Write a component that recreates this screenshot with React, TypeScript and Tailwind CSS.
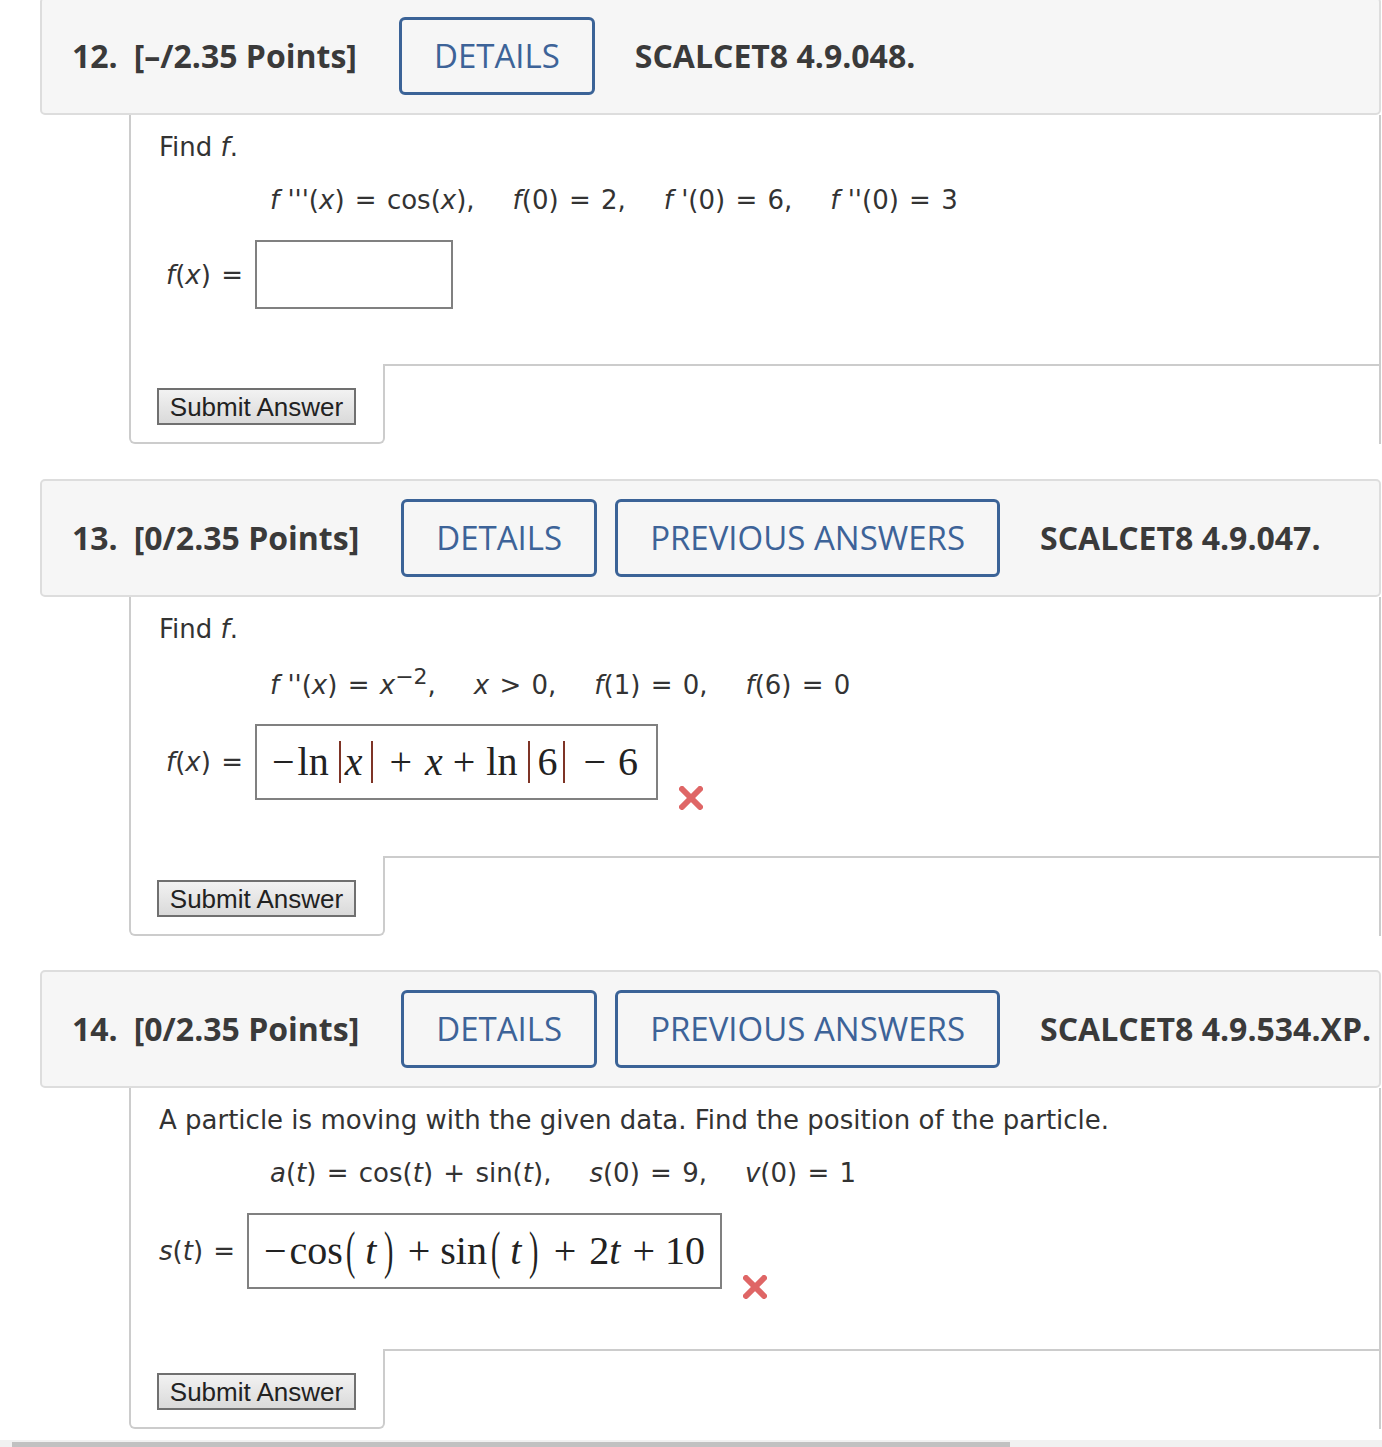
import React from "react";

const headFont = { fontFamily: '"Open Sans", "DejaVu Sans", sans-serif' };
const bodyFont = { fontFamily: '"DejaVu Sans", Verdana, sans-serif' };
const btnFont = { fontFamily: '"Liberation Sans", Arial, sans-serif' };
const mathFont = { fontFamily: '"Liberation Serif", "DejaVu Serif", serif' };

// operator with a little extra room either side, like the site's equation spacing
function Op({ s }: { s: string }) {
  return <span className="mx-[2px]"> {s} </span>;
}

function WrongMark() {
  return (
    <svg
      width="30"
      height="28"
      viewBox="0 0 30 28"
      className="ml-[18px] self-end mb-[-12px]"
    >
      <g stroke="#dd5a5a" strokeWidth="6" strokeLinecap="round" opacity="0.92">
        <line x1="6" y1="5" x2="24" y2="23" />
        <line x1="24" y1="5" x2="6" y2="23" />
      </g>
    </svg>
  );
}

function Bar({ ml }: { ml: string }) {
  return <span className={`inline-block w-[2px] h-[42px] bg-[#7e3426] ${ml}`} />;
}

function Paren({ ch, ml }: { ch: string; ml: string }) {
  return (
    <span className={`inline-block scale-x-[0.7] scale-y-[1.3] ${ml}`}>{ch}</span>
  );
}

function Header({
  num,
  points,
  prev,
  code,
}: {
  num: string;
  points: string;
  prev?: boolean;
  code: string;
}) {
  return (
    <div
      className="h-[118px] rounded-[5px] border-2 border-[#dddddd] bg-[#f6f6f6] flex items-center pl-[30px]"
      style={headFont}
    >
      <span className="text-[32px] font-bold text-[#3a3a3a]">{num}</span>
      <span className="text-[32px] font-bold text-[#3a3a3a] ml-[16px]">{points}</span>
      <button className="ml-[42px] h-[78px] px-[32px] border-[3px] border-[#3b6397] rounded-[6px] text-[33px] text-[#3d6398]">
        DETAILS
      </button>
      {prev && (
        <button className="ml-[18px] h-[78px] px-[32px] border-[3px] border-[#3b6397] rounded-[6px] text-[33px] text-[#3d6398]">
          PREVIOUS ANSWERS
        </button>
      )}
      <span className="ml-[40px] text-[32px] font-bold text-[#3a3a3a] whitespace-nowrap">
        {code}
      </span>
    </div>
  );
}

function Footer() {
  return (
    <div className="flex ml-[89px]">
      <div className="w-[256px] h-[80px] border-l-2 border-r-2 border-b-2 border-[#cccccc] rounded-b-[6px] pl-[26px] pt-[24px]">
        <button
          className="w-[199px] h-[37px] border-2 border-[#707070] bg-gradient-to-b from-[#f2f2f2] to-[#dadada] text-[26px] leading-none text-[#222222]"
          style={btnFont}
        >
          Submit Answer
        </button>
      </div>
      <div className="flex-1 border-t-2 border-r-2 border-[#cccccc]" />
    </div>
  );
}

export default function App() {
  return (
    <div className="w-[1382px] bg-white overflow-hidden">
      <div className="-mt-[3px] pl-[40px] pr-[1px]">
        {/* question 12 */}
        <Header num="12." points="[–/2.35 Points]" code="SCALCET8 4.9.048." />
        <div
          className="ml-[89px] border-l-2 border-r-2 border-[#cccccc] pl-[28px] pt-[17px] text-[26px] leading-[30px] text-[#333333]"
          style={bodyFont}
        >
          <div>
            Find <i>f</i>.
          </div>
          <div className="mt-[23px] ml-[111px] flex gap-[38px] whitespace-pre h-[30px]">
            <span>
              <i>f</i> '''(<i>x</i>)<Op s="=" />cos(<i>x</i>),
            </span>
            <span>
              <i>f</i>(0)<Op s="=" />2,
            </span>
            <span>
              <i>f</i> '(0)<Op s="=" />6,
            </span>
            <span>
              <i>f</i> ''(0)<Op s="=" />3
            </span>
          </div>
          <div className="mt-[25px] flex items-center pb-[55px]">
            <span className="ml-[7px] w-[89px] whitespace-pre">
              <i>f</i>(<i>x</i>)<Op s="=" />
            </span>
            <div className="w-[198px] h-[69px] border-2 border-[#808080]" />
          </div>
        </div>
        <Footer />

        {/* question 13 */}
        <div className="mt-[35px]">
          <Header
            num="13."
            points="[0/2.35 Points]"
            prev
            code="SCALCET8 4.9.047."
          />
        </div>
        <div
          className="ml-[89px] border-l-2 border-r-2 border-[#cccccc] pl-[28px] pt-[17px] text-[26px] leading-[30px] text-[#333333]"
          style={bodyFont}
        >
          <div>
            Find <i>f</i>.
          </div>
          <div className="mt-[26px] ml-[111px] flex gap-[38px] whitespace-pre h-[30px]">
            <span>
              <i>f</i> ''(<i>x</i>)<Op s="=" />
              <i>x</i>
              <sup className="text-[22px] -top-[10px]">−2</sup>,
            </span>
            <span>
              <i>x</i>
              <Op s=">" />
              0,
            </span>
            <span>
              <i>f</i>(1)<Op s="=" />0,
            </span>
            <span>
              <i>f</i>(6)<Op s="=" />0
            </span>
          </div>
          <div className="mt-[24px] flex items-center pb-[56px]">
            <span className="ml-[7px] w-[89px] whitespace-pre">
              <i>f</i>(<i>x</i>)<Op s="=" />
            </span>
            <div
              className="w-[403px] h-[76px] border-2 border-[#808080] pl-[15px] flex items-center text-[40px] text-[#222222] whitespace-nowrap"
              style={mathFont}
            >
              <span>−</span>
              <span className="ml-[3px]">ln</span>
              <Bar ml="ml-[10px]" />
              <i className="ml-[4px]">x</i>
              <Bar ml="ml-[9px]" />
              <span className="ml-[16px]">+</span>
              <i className="ml-[13px]">x</i>
              <span className="ml-[10px]">+</span>
              <span className="ml-[11px]">ln</span>
              <Bar ml="ml-[11px]" />
              <span className="ml-[7px]">6</span>
              <Bar ml="ml-[6px]" />
              <span className="ml-[18px]">−</span>
              <span className="ml-[12px]">6</span>
            </div>
            <WrongMark />
          </div>
        </div>
        <Footer />

        {/* question 14 */}
        <div className="mt-[34px]">
          <Header
            num="14."
            points="[0/2.35 Points]"
            prev
            code="SCALCET8 4.9.534.XP."
          />
        </div>
        <div
          className="ml-[89px] border-l-2 border-r-2 border-[#cccccc] pl-[28px] pt-[17px] text-[26px] leading-[30px] text-[#333333]"
          style={bodyFont}
        >
          <div className="whitespace-nowrap">
            A particle is moving with the given data. Find the position of the particle.
          </div>
          <div className="mt-[23px] ml-[111px] flex gap-[38px] whitespace-pre h-[30px]">
            <span>
              <i>a</i>(<i>t</i>)<Op s="=" />cos(<i>t</i>)<Op s="+" />sin(<i>t</i>),
            </span>
            <span>
              <i>s</i>(0)<Op s="=" />9,
            </span>
            <span>
              <i>v</i>(0)<Op s="=" />1
            </span>
          </div>
          <div className="mt-[25px] flex items-center pb-[60px]">
            <span className="w-[88px] whitespace-pre">
              <i>s</i>(<i>t</i>)<Op s="=" />
            </span>
            <div
              className="w-[475px] h-[76px] border-2 border-[#808080] pl-[15px] flex items-center text-[40px] text-[#222222] whitespace-nowrap"
              style={mathFont}
            >
              <span>−</span>
              <span className="ml-[3px]">cos</span>
              <Paren ch="(" ml="ml-[1px]" />
              <i className="ml-[8px]">t</i>
              <Paren ch=")" ml="ml-[6px]" />
              <span className="ml-[12px]">+</span>
              <span className="ml-[10px]">sin</span>
              <Paren ch="(" ml="ml-[2px]" />
              <i className="ml-[8px]">t</i>
              <Paren ch=")" ml="ml-[6px]" />
              <span className="ml-[13px]">+</span>
              <span className="ml-[13px]">
                2<i>t</i>
              </span>
              <span className="ml-[12px]">+</span>
              <span className="ml-[10px]">10</span>
            </div>
            <WrongMark />
          </div>
        </div>
        <Footer />
      </div>

      {/* horizontal scrollbar */}
      <div className="mt-[11px] h-[8px] bg-[#f1f1f1] pt-[2px] pl-[12px]">
        <div className="w-[998px] h-[6px] bg-[#c1c1c1]" />
      </div>
    </div>
  );
}
